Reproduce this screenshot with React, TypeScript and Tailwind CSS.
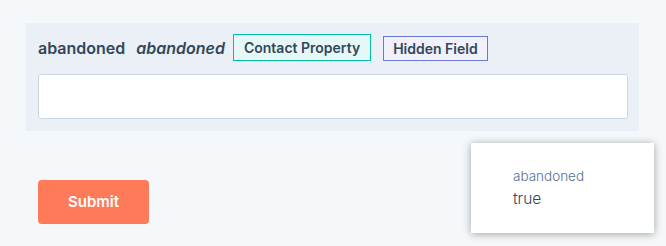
export default function App() {
  return (
    <div
      className="relative w-[666px] h-[246px] overflow-hidden bg-[#f5f8fa] text-[#33475b]"
      style={{ fontFamily: 'Inter, "Noto Sans", sans-serif' }}
    >
      <div className="pt-[23px] pl-[26px]">
        <div className="w-[613px] bg-[#eaf0f6] px-3 pt-[11px] pb-3">
          <div className="flex items-center h-[27px]">
            <span className="text-[16px] font-semibold">abandoned</span>
            <span className="ml-[11px] text-[16px] font-semibold italic">abandoned</span>
            <span className="ml-[8px] h-[27px] flex items-center border border-[#00bda5] bg-[#e5f8f6] px-[10px] text-[14px] font-semibold">
              Contact Property
            </span>
            <span className="ml-[12px] mt-[2px] h-[25px] flex items-center border border-[#6a78d1] bg-[#f0f1fa] px-[9px] text-[14px] font-semibold">
              Hidden Field
            </span>
          </div>
          <div className="mt-[13px] h-[45px] w-[590px] rounded-[3px] border border-[#cbd6e2] bg-white" />
        </div>
      </div>
      <div className="pl-[38px] pt-[49px]">
        <button className="w-[111px] h-[44px] rounded-[4px] bg-[#ff7a59] text-white text-[15px] font-semibold">
          Submit
        </button>
      </div>
      <div className="absolute left-[471px] top-[143px] w-[183px] h-[90px] bg-white shadow-[0_1px_8px_rgba(0,0,0,0.35)] pl-[42px] pt-[24px]">
        <div className="text-[13.5px] font-light text-[#516f90] leading-[18px]">abandoned</div>
        <div className="text-[15.5px] font-light text-[#33475b] leading-[22px] mt-[3px]">true</div>
      </div>
    </div>
  );
}
